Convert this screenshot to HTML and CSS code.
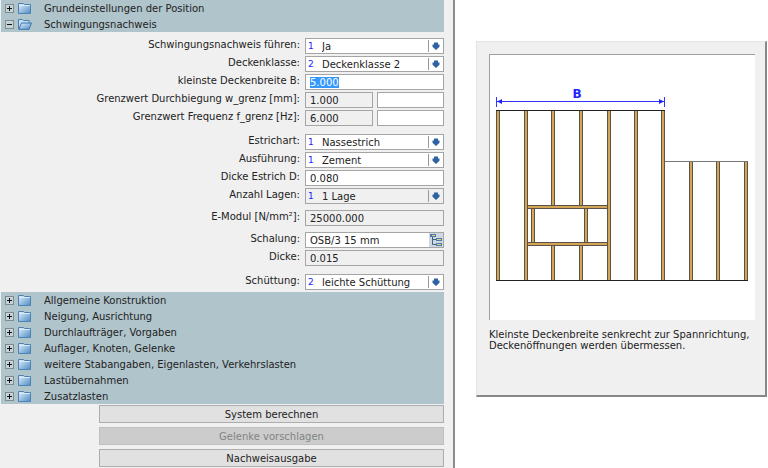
FILE: index.html
```html
<!doctype html>
<html lang="de">
  <head>
    <meta charset="utf-8">
    <meta name="viewport" content="width=device-width, initial-scale=1">
    <title>Schwingungsnachweis</title>
    <link rel="stylesheet" href="styles.css">
  </head>
  <body>
    <!-- shared icons -->
    <svg class="sprite" aria-hidden="true">
      <defs>
        <linearGradient id="blue" x1="0" y1="0" x2="1" y2="1">
          <stop offset="0" stop-color="#e4f1fb"/>
          <stop offset="1" stop-color="#4f8cc4"/>
        </linearGradient>
      </defs>
      <symbol id="plus" viewBox="0 0 9 9">
        <rect x=".5" y=".5" width="8" height="8" fill="#c6d3d7" stroke="#7f8d92"/>
        <path d="M2 4.500h5M4.500 2v5" stroke="#111"/>
      </symbol>
      <symbol id="minus" viewBox="0 0 9 9">
        <rect x=".5" y=".5" width="8" height="8" fill="#c6d3d7" stroke="#7f8d92"/>
        <path d="M2 4.500h5" stroke="#111"/>
      </symbol>
      <symbol id="folder" viewBox="0 0 14 12">
        <path d="M.5 1.500h5l1 1h6v9H.5z" fill="url(#blue)" stroke="#4a82b5"/>
        <path d="M1 3.500h11" stroke="#d8eafa"/>
      </symbol>
      <symbol id="folder-open" viewBox="0 0 14 12">
        <path d="M.5 11V1.500h4l1 1h5.500V5" fill="#c3def3" stroke="#4a82b5"/>
        <path d="M.7 11.300L3.500 5h10L11 11.300z" fill="url(#blue)" stroke="#3a74ab"/>
      </symbol>
      <symbol id="down" viewBox="0 0 8 8">
        <path d="M2 0.500h4v2h1.500v2.300L4 8 .5 4.800V2.500H2z" fill="#2f62a0"/>
      </symbol>
    </svg>

    <main class="page">
      <section class="panel">
        <ul class="tree">
          <li><button class="node"><svg class="toggle"><use href="#plus"/></svg><svg class="folder"><use href="#folder"/></svg>Grundeinstellungen der Position</button></li>
          <li><button class="node"><svg class="toggle"><use href="#minus"/></svg><svg class="folder"><use href="#folder-open"/></svg>Schwingungsnachweis</button></li>
        </ul>

        <form class="form">
          <div class="group">
            <div class="row">
              <label for="nachweis">Schwingungsnachweis führen:</label>
              <div class="choice"><span class="num">1</span><select id="nachweis"><option>Ja</option></select><svg class="arrow"><use href="#down"/></svg></div>
            </div>
            <div class="row">
              <label for="klasse">Deckenklasse:</label>
              <div class="choice"><span class="num">2</span><select id="klasse"><option>Deckenklasse 2</option></select><svg class="arrow"><use href="#down"/></svg></div>
            </div>
            <div class="row">
              <label for="breite">kleinste Deckenbreite B:</label>
              <input id="breite" value="5.000" autofocus>
            </div>
            <div class="row">
              <label for="w_grenz">Grenzwert Durchbiegung w_grenz [mm]:</label>
              <div class="pair"><input id="w_grenz" value="1.000" readonly><input aria-label="w_grenz eigener Wert"></div>
            </div>
            <div class="row">
              <label for="f_grenz">Grenzwert Frequenz f_grenz [Hz]:</label>
              <div class="pair"><input id="f_grenz" value="6.000" readonly><input aria-label="f_grenz eigener Wert"></div>
            </div>
          </div>

          <div class="group">
            <div class="row">
              <label for="estrich">Estrichart:</label>
              <div class="choice"><span class="num">1</span><select id="estrich"><option>Nassestrich</option></select><svg class="arrow"><use href="#down"/></svg></div>
            </div>
            <div class="row">
              <label for="ausf">Ausführung:</label>
              <div class="choice"><span class="num">1</span><select id="ausf"><option>Zement</option></select><svg class="arrow"><use href="#down"/></svg></div>
            </div>
            <div class="row">
              <label for="dicke_d">Dicke Estrich D:</label>
              <input id="dicke_d" value="0.080">
            </div>
            <div class="row">
              <label for="lagen">Anzahl Lagen:</label>
              <div class="choice"><span class="num">1</span><select id="lagen" disabled><option>1 Lage</option></select><svg class="arrow"><use href="#down"/></svg></div>
            </div>
          </div>

          <div class="group tight">
            <div class="row">
              <label for="emodul">E-Modul [N/mm²]:</label>
              <input id="emodul" value="25000.000" readonly>
            </div>
          </div>

          <div class="group tight">
            <div class="row">
              <label for="schalung">Schalung:</label>
              <div class="choice">
                <input id="schalung" value="OSB/3 15 mm">
                <button class="pick" type="button" aria-label="Material">
                  <svg viewBox="0 0 14 14">
                    <path d="M3.500 3v8.500H7M3.500 6.500H7" fill="none" stroke="#3c6288"/>
                    <path d="M1 1h6v3H1z" fill="#4f7ca8"/>
                    <path d="M7 5h6v3H7zM7 10h6v3H7z" fill="#4f7ca8"/>
                    <path d="M3 2h3v1H3zM8 6h4v1H8zM8 11h4v1H8z" fill="#d5d98a"/>
                  </svg>
                </button>
              </div>
            </div>
            <div class="row">
              <label for="dicke">Dicke:</label>
              <input id="dicke" value="0.015" readonly>
            </div>
          </div>

          <div class="group">
            <div class="row">
              <label for="schuettung">Schüttung:</label>
              <div class="choice"><span class="num">2</span><select id="schuettung"><option>leichte Schüttung</option></select><svg class="arrow"><use href="#down"/></svg></div>
            </div>
          </div>
        </form>

        <ul class="tree">
          <li><button class="node"><svg class="toggle"><use href="#plus"/></svg><svg class="folder"><use href="#folder"/></svg>Allgemeine Konstruktion</button></li>
          <li><button class="node"><svg class="toggle"><use href="#plus"/></svg><svg class="folder"><use href="#folder"/></svg>Neigung, Ausrichtung</button></li>
          <li><button class="node"><svg class="toggle"><use href="#plus"/></svg><svg class="folder"><use href="#folder"/></svg>Durchlaufträger, Vorgaben</button></li>
          <li><button class="node"><svg class="toggle"><use href="#plus"/></svg><svg class="folder"><use href="#folder"/></svg>Auflager, Knoten, Gelenke</button></li>
          <li><button class="node"><svg class="toggle"><use href="#plus"/></svg><svg class="folder"><use href="#folder"/></svg>weitere Stabangaben, Eigenlasten, Verkehrslasten</button></li>
          <li><button class="node"><svg class="toggle"><use href="#plus"/></svg><svg class="folder"><use href="#folder"/></svg>Lastübernahmen</button></li>
          <li><button class="node"><svg class="toggle"><use href="#plus"/></svg><svg class="folder"><use href="#folder"/></svg>Zusatzlasten</button></li>
        </ul>

        <div class="actions">
          <button>System berechnen</button>
          <button disabled>Gelenke vorschlagen</button>
          <button>Nachweisausgabe</button>
        </div>
      </section>

      <aside class="help">
        <figure class="help__box">
          <svg class="plan" viewBox="0 0 265 265" role="img" aria-label="Deckenbreite B">
            <defs>
              <g id="joist">
                <rect width="4" height="170" fill="#5c5346"/>
                <rect x="1" width="2" height="170" fill="#d3a657"/>
              </g>
              <g id="joist-short">
                <rect width="4" height="119" fill="#5c5346"/>
                <rect x="1" width="2" height="119" fill="#d3a657"/>
              </g>
            </defs>
            <!-- joists -->
            <use href="#joist" x="6" y="55"/>
            <use href="#joist" x="34" y="55"/>
            <use href="#joist" x="61" y="55"/>
            <use href="#joist" x="89" y="55"/>
            <use href="#joist" x="117" y="55"/>
            <use href="#joist" x="144" y="55"/>
            <use href="#joist" x="171" y="55"/>
            <use href="#joist-short" x="199" y="106"/>
            <use href="#joist-short" x="226" y="106"/>
            <use href="#joist-short" x="254" y="106"/>
            <!-- opening -->
            <rect x="38" y="151" width="79" height="39" fill="#fff"/>
            <rect x="38" y="150" width="79" height="4" fill="#5c5346"/>
            <rect x="38" y="151" width="79" height="2" fill="#d3a657"/>
            <rect x="38" y="187" width="79" height="4" fill="#5c5346"/>
            <rect x="38" y="188" width="79" height="2" fill="#d3a657"/>
            <rect x="41" y="154" width="4" height="33" fill="#5c5346"/>
            <rect x="42" y="154" width="2" height="33" fill="#d3a657"/>
            <rect x="94" y="154" width="4" height="33" fill="#5c5346"/>
            <rect x="95" y="154" width="2" height="33" fill="#d3a657"/>
            <!-- outline -->
            <path d="M6 55.500h169M6 225.500h252" stroke="#222"/>
            <path d="M175 106.500h83" stroke="#777"/>
            <!-- dimension -->
            <path d="M6.500 42v10M174.500 42v10M7 46.500h167" stroke="#33f"/>
            <path d="M7 46.500l5-2.500v5zM174 46.500l-5-2.500v5z" fill="#22f"/>
            <text class="plan__dim" x="87" y="43" text-anchor="middle">B</text>
          </svg>
          <figcaption>Kleinste Deckenbreite senkrecht zur Spannrichtung, Deckenöffnungen werden übermessen.</figcaption>
        </figure>
      </aside>
    </main>

    <script>
      document.getElementById('breite').select();
    </script>
  </body>
</html>
```
FILE: styles.css
```css
* {
  box-sizing: border-box;
}
body {
  margin: 0;
  background: #fff;
  color: #222;
  font-family: "DejaVu Sans", Verdana, sans-serif;
  font-size: 10px;
}
button, input, select {
  font: inherit;
  color: inherit;
  margin: 0;
  border-radius: 0;
}
.sprite {
  position: absolute;
  width: 0;
  height: 0;
}
.page {
  display: grid;
  grid-template-columns: minmax(0, 455fr) minmax(0, 313fr);
  min-height: 100vh;
}
/*--------------------------*/
.panel {
  background: #f0f0f0;
  border-right: 2px solid #8c8c8c;
  padding: 0 9px 0 1px;
}
.tree {
  list-style: none;
  margin: 0;
  padding: 0;
  background: #b0c4cb;
}
.node {
  display: flex;
  align-items: center;
  width: 100%;
  height: 16px;
  padding: 0 0 0 4px;
  border: 0;
  background: none;
  text-align: left;
  white-space: nowrap;
}
.toggle {
  width: 9px;
  height: 9px;
  margin-right: 4px;
}
.folder {
  width: 14px;
  height: 12px;
  margin-right: 12px;
}
/*--------------------------*/
.form {
  padding: 6px 0 2px;
}
.group {
  display: grid;
  gap: 2px;
}
.group + .group {
  margin-top: 8px;
}
.group + .tight {
  margin-top: 6px;
}
.row {
  display: grid;
  grid-template-columns: 1fr 139px;
  column-gap: 5px;
  height: 16px;
}
.row label {
  line-height: 13px;
  text-align: right;
}
.row input, .row select {
  width: 100%;
  min-width: 0;
  height: 16px;
  padding: 0 4px;
  border: 1px solid #a5a5a5;
  background: #fff;
  outline: none;
}
.row input:read-only, .row select:disabled {
  background: #f0f0f0;
  color: inherit;
  opacity: 1;
}
.row input::selection {
  background: #3399ff;
  color: #fff;
}
.pair {
  display: flex;
  gap: 4px;
}
.choice {
  position: relative;
}
.row select {
  appearance: none;
  padding: 0 16px;
}
.num {
  position: absolute;
  left: 3px;
  top: 2px;
  color: #22f;
  font-size: 9px;
  line-height: 12px;
}
.arrow {
  position: absolute;
  right: 1px;
  top: 2px;
  width: 15px;
  height: 12px;
  padding: 2px 3px;
  border-left: 1px solid #999;
  pointer-events: none;
}
.pick {
  position: absolute;
  right: 1px;
  top: 1px;
  width: 14px;
  height: 14px;
  padding: 0;
  border: 0;
  background: #cfd8e0;
}
.pick svg {
  display: block;
}
/*--------------------------*/
.actions {
  display: grid;
  gap: 4px;
  padding: 1px 0 1px 98px;
}
.actions button {
  height: 18px;
  padding: 0;
  border: 1px solid #adadad;
  background: #e1e1e1;
}
.actions button:disabled {
  background: #ccc;
  border-color: #bfbfbf;
  color: #838383;
}
/*--------------------------*/
.help {
  padding: 41px 1px 0 21px;
}
.help__box {
  margin: 0;
  min-height: 356px;
  padding: 12px 10px 12px 12px;
  background: #f0f0f0;
  border: 1px solid #e3e3e3;
  border-right: 2px solid #888;
  border-bottom: 2px solid #888;
}
.plan {
  display: block;
  width: 100%;
  background: #fff;
  border-left: 1px solid #a0a0a0;
  border-top: 1px solid #a0a0a0;
}
.plan__dim {
  fill: #22f;
  font-size: 12px;
  font-weight: bold;
}
.help figcaption {
  margin-top: 9px;
  line-height: 11px;
}
```
